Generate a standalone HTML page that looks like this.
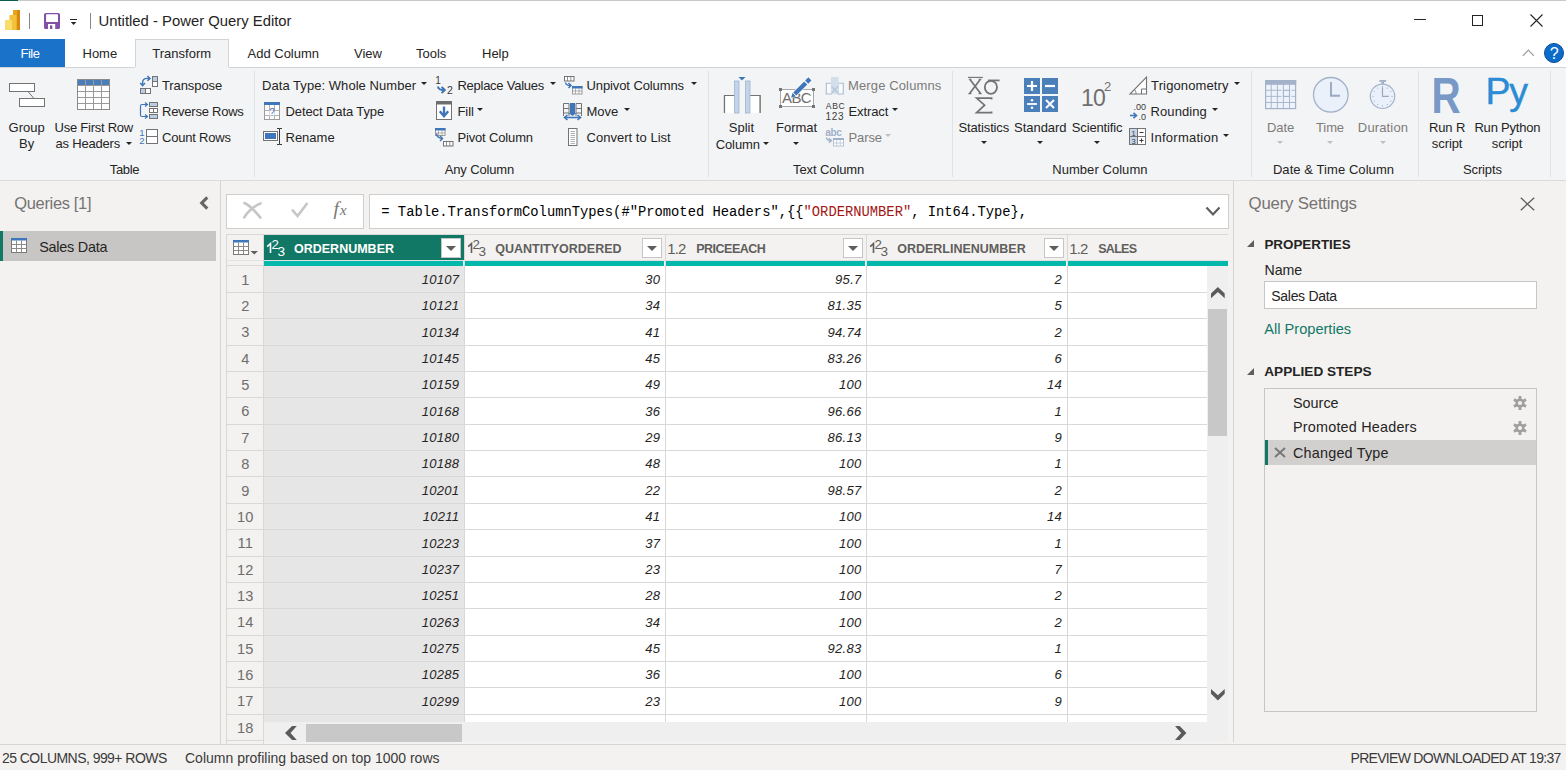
<!DOCTYPE html>
<html><head><meta charset="utf-8"><style>
html,body{margin:0;padding:0;width:1566px;height:770px;overflow:hidden;background:#fff;}
.t{position:absolute;white-space:pre;font-family:'Liberation Sans', sans-serif;}
.r{position:absolute;}
svg.r{overflow:visible;}
</style></head><body>
<div class="r" style="left:0px;top:0px;width:1566px;height:39px;background:#ffffff;"></div><div class="r" style="left:0px;top:0px;width:1566px;height:1px;background:#c9c9c9;"></div><div class="r" style="left:0px;top:0px;width:18px;height:1px;background:#0e5c4b;"></div><svg class="r" style="left:5px;top:10px;" width="16" height="20" viewBox="0 0 16 20">
<rect x="8" y="0" width="7" height="20" fill="#e8a317"/>
<rect x="12" y="0" width="3" height="20" fill="#d48a0c"/>
<rect x="4.5" y="5" width="7" height="15" fill="#f2c23a"/>
<rect x="0" y="10" width="7" height="10" fill="#f9dc6c"/>
</svg><div class="r" style="left:29px;top:13px;width:1px;height:16px;background:#8a8886;"></div><svg class="r" style="left:44px;top:13px;" width="16" height="16" viewBox="0 0 16 16">
<rect x="0" y="0" width="16" height="16" rx="1.6" fill="#8350a8"/>
<rect x="2.1" y="1.3" width="11.9" height="7.8" rx="0.6" fill="#ffffff"/>
<rect x="4" y="11" width="7.2" height="5" fill="#ffffff"/>
<rect x="6" y="12.4" width="2.3" height="3.6" fill="#8350a8"/>
</svg><svg class="r" style="left:70px;top:19px;" width="8" height="7" viewBox="0 0 8 7"><rect x="0" y="0" width="7" height="1" fill="#252423"/><path d="M0.8 3H6.4L3.6 6Z" fill="#252423"/></svg><div class="r" style="left:90px;top:13px;width:1px;height:16px;background:#8a8886;"></div><div class="t" style="left:98.5px;top:14.13px;font-size:14.85px;line-height:14.85px;color:#252423;font-weight:400;font-style:normal;letter-spacing:0px;font-family:'Liberation Sans', sans-serif;">Untitled - Power Query Editor</div><div class="r" style="left:1414px;top:19px;width:12px;height:1px;background:#252423;"></div><div class="r" style="left:1472px;top:14.5px;width:11px;height:11px;background:none;border:1px solid #252423;box-sizing:border-box;"></div><svg class="r" style="left:1530px;top:14px;" width="13" height="13" viewBox="0 0 13 13"><path d="M0.5 0.5L12.5 12.5M12.5 0.5L0.5 12.5" stroke="#252423" stroke-width="1.1"/></svg><div class="r" style="left:0px;top:39px;width:1566px;height:28px;background:#ffffff;"></div><div class="r" style="left:0px;top:39px;width:65px;height:28px;background:#1a73c8;"></div><div class="t" style="left:20.5px;top:47.00px;font-size:13px;line-height:13px;color:#ffffff;font-weight:400;font-style:normal;letter-spacing:-0.5px;font-family:'Liberation Sans', sans-serif;">File</div><div class="t" style="left:82.5px;top:47.00px;font-size:13px;line-height:13px;color:#252423;font-weight:400;font-style:normal;letter-spacing:0px;font-family:'Liberation Sans', sans-serif;">Home</div><div class="r" style="left:135px;top:39px;width:94px;height:29px;background:#f3f4f6;border:1px solid #d2d3d5;border-bottom:none;box-sizing:border-box;"></div><div class="t" style="left:152.3px;top:47.00px;font-size:13px;line-height:13px;color:#252423;font-weight:400;font-style:normal;letter-spacing:0px;font-family:'Liberation Sans', sans-serif;">Transform</div><div class="t" style="left:247.5px;top:47.00px;font-size:13px;line-height:13px;color:#252423;font-weight:400;font-style:normal;letter-spacing:0px;font-family:'Liberation Sans', sans-serif;">Add Column</div><div class="t" style="left:354px;top:47.00px;font-size:13px;line-height:13px;color:#252423;font-weight:400;font-style:normal;letter-spacing:0px;font-family:'Liberation Sans', sans-serif;">View</div><div class="t" style="left:416px;top:47.00px;font-size:13px;line-height:13px;color:#252423;font-weight:400;font-style:normal;letter-spacing:0px;font-family:'Liberation Sans', sans-serif;">Tools</div><div class="t" style="left:482px;top:47.00px;font-size:13px;line-height:13px;color:#252423;font-weight:400;font-style:normal;letter-spacing:0px;font-family:'Liberation Sans', sans-serif;">Help</div><svg class="r" style="left:1521.5px;top:49px;" width="13" height="8" viewBox="0 0 13 8"><path d="M0.8 6.8L6.3 1.2L11.8 6.8" stroke="#9a9a9a" stroke-width="1.2" fill="none"/></svg><svg class="r" style="left:1543.5px;top:43px;" width="20" height="20" viewBox="0 0 20 20"><circle cx="10" cy="10" r="9.5" fill="#0c6cc9" stroke="#0a4c98" stroke-width="1"/><text x="10.2" y="15.9" text-anchor="middle" font-family="Liberation Sans" font-size="16" fill="#fff">?</text></svg><div class="r" style="left:0px;top:67px;width:1566px;height:114px;background:#f3f4f6;"></div><div class="r" style="left:0px;top:67px;width:135px;height:1px;background:#d2d3d5;"></div><div class="r" style="left:229px;top:67px;width:1337px;height:1px;background:#d2d3d5;"></div><div class="r" style="left:0px;top:180px;width:1566px;height:1px;background:#dadbdd;"></div><div class="r" style="left:254px;top:71px;width:1px;height:106px;background:#e1e2e4;"></div><div class="r" style="left:708px;top:71px;width:1px;height:106px;background:#e1e2e4;"></div><div class="r" style="left:952px;top:71px;width:1px;height:106px;background:#e1e2e4;"></div><div class="r" style="left:1251px;top:71px;width:1px;height:106px;background:#e1e2e4;"></div><div class="r" style="left:1418px;top:71px;width:1px;height:106px;background:#e1e2e4;"></div><div class="r" style="left:1550px;top:71px;width:1px;height:106px;background:#e1e2e4;"></div><svg class="r" style="left:0px;top:70px;" width="60" height="50" viewBox="0 0 60 50">
<rect x="9.5" y="13.5" width="25" height="8" fill="#fff" stroke="#737373"/>
<rect x="19.5" y="28.5" width="25" height="8" fill="#fff" stroke="#737373"/>
<path d="M28 21.5L34 28.5" stroke="#737373" stroke-width="1"/>
</svg><div class="t" style="left:26.6px;transform:translateX(-50%);top:120.80px;font-size:13px;line-height:13px;color:#252423;font-weight:400;font-style:normal;letter-spacing:0px;font-family:'Liberation Sans', sans-serif;">Group</div><div class="t" style="left:26.6px;transform:translateX(-50%);top:137.10px;font-size:13px;line-height:13px;color:#252423;font-weight:400;font-style:normal;letter-spacing:0px;font-family:'Liberation Sans', sans-serif;">By</div><svg class="r" style="left:77px;top:79px;" width="33" height="31" viewBox="0 0 33 31">
<rect x="0.5" y="0.5" width="32" height="30" fill="#fff" stroke="#8a8a8a"/>
<rect x="0.5" y="0.5" width="32" height="6" fill="#4a7ebb" stroke="#4a7ebb"/>
<path d="M0 6.5H33" stroke="#9a9a9a"/><path d="M0 12.5H33" stroke="#9a9a9a"/><path d="M0 18.5H33" stroke="#9a9a9a"/><path d="M0 24.5H33" stroke="#9a9a9a"/><path d="M8.5 0V31" stroke="#9a9a9a"/><path d="M16.5 0V31" stroke="#9a9a9a"/><path d="M24.5 0V31" stroke="#9a9a9a"/>
<rect x="0.5" y="0.5" width="32" height="30" fill="none" stroke="#8a8a8a"/>
</svg><div class="t" style="left:93.8px;transform:translateX(-50%);top:120.80px;font-size:13px;line-height:13px;color:#252423;font-weight:400;font-style:normal;letter-spacing:-0.25px;font-family:'Liberation Sans', sans-serif;">Use First Row</div><div class="t" style="left:55.5px;top:137.10px;font-size:13px;line-height:13px;color:#252423;font-weight:400;font-style:normal;letter-spacing:-0.2px;font-family:'Liberation Sans', sans-serif;">as Headers</div><svg class="r" style="left:125.5px;top:141.5px;" width="6" height="3" viewBox="0 0 6 3"><path d="M0 0H6L3.0 3Z" fill="#252423"/></svg><svg class="r" style="left:139px;top:75px;" width="20" height="20" viewBox="0 0 20 20">
<rect x="13.5" y="1.5" width="5" height="10" fill="#fff" stroke="#737373"/>
<rect x="14" y="2" width="4" height="4.5" fill="#b9cde5"/>
<path d="M13.5 6.5H18.5" stroke="#737373"/>
<rect x="1.5" y="13.5" width="10" height="5" fill="#fff" stroke="#737373"/>
<rect x="2" y="14" width="4.5" height="4" fill="#b9cde5"/>
<path d="M6.5 13.5V18.5" stroke="#737373"/>
<path d="M3.6 9.6V7.6Q3.6 3.4 8 3.4H10" stroke="#3f76b9" stroke-width="1.4" fill="none"/>
<path d="M8.4 1L11 3.4L8.4 5.8" stroke="#3f76b9" stroke-width="1.5" fill="none"/>
<path d="M1.2 8L3.6 10.6L6 8" stroke="#3f76b9" stroke-width="1.5" fill="none"/>
</svg><div class="t" style="left:162px;top:78.80px;font-size:13px;line-height:13px;color:#252423;font-weight:400;font-style:normal;letter-spacing:-0.1px;font-family:'Liberation Sans', sans-serif;">Transpose</div><svg class="r" style="left:139px;top:101px;" width="20" height="19" viewBox="0 0 20 19">
<rect x="10.5" y="1.5" width="8" height="4" fill="#b9cde5" stroke="#737373"/>
<rect x="10.5" y="7.5" width="8" height="4" fill="#fff" stroke="#737373"/>
<path d="M14.5 7.5V11.5" stroke="#737373"/>
<rect x="10.5" y="13.5" width="8" height="4" fill="#b9cde5" stroke="#737373"/>
<path d="M8 3.5H3Q1.5 3.5 1.5 5V14Q1.5 15.5 3 15.5H8" stroke="#3f76b9" stroke-width="1.2" fill="none"/>
<path d="M6 1.5L8.5 3.5L6 5.5M6 13.5L8.5 15.5L6 17.5" stroke="#3f76b9" stroke-width="1.2" fill="none"/>
</svg><div class="t" style="left:162px;top:104.70px;font-size:13px;line-height:13px;color:#252423;font-weight:400;font-style:normal;letter-spacing:-0.25px;font-family:'Liberation Sans', sans-serif;">Reverse Rows</div><svg class="r" style="left:139px;top:128px;" width="20" height="17" viewBox="0 0 20 17">
<text x="3" y="8" font-family="Liberation Sans" font-size="9.5" fill="#3f76b9" text-anchor="middle">1</text>
<text x="3" y="15.8" font-family="Liberation Sans" font-size="9.5" fill="#3f76b9" text-anchor="middle">2</text>
<rect x="7.5" y="1.5" width="11" height="14" fill="#fff" stroke="#737373"/>
<path d="M7.5 8.5H18.5" stroke="#737373"/>
</svg><div class="t" style="left:162px;top:130.70px;font-size:13px;line-height:13px;color:#252423;font-weight:400;font-style:normal;letter-spacing:-0.2px;font-family:'Liberation Sans', sans-serif;">Count Rows</div><div class="t" style="left:124.5px;transform:translateX(-50%);top:163.00px;font-size:13px;line-height:13px;color:#252423;font-weight:400;font-style:normal;letter-spacing:-0.35px;font-family:'Liberation Sans', sans-serif;">Table</div><div class="t" style="left:262px;top:78.80px;font-size:13px;line-height:13px;color:#252423;font-weight:400;font-style:normal;letter-spacing:0.05px;font-family:'Liberation Sans', sans-serif;">Data Type: Whole Number</div><svg class="r" style="left:421.0px;top:82.3px;" width="6" height="3" viewBox="0 0 6 3"><path d="M0 0H6L3.0 3Z" fill="#252423"/></svg><svg class="r" style="left:263px;top:101px;" width="18" height="20" viewBox="0 0 18 20">
<rect x="1.5" y="1.5" width="15" height="17" fill="#fff" stroke="#9a9a9a"/>
<rect x="1" y="1" width="16" height="3" fill="#3f76b9"/>
<path d="M1.5 9.5H16.5M1.5 14.5H16.5M6.5 4V18.5M11.5 4V18.5" stroke="#b0b0b0"/>
<rect x="6.5" y="9.5" width="5" height="5" fill="#fff"/><text x="9" y="15" font-family="Liberation Sans" font-size="10" fill="#3f76b9" text-anchor="middle">?</text>
</svg><div class="t" style="left:285.5px;top:104.70px;font-size:13px;line-height:13px;color:#252423;font-weight:400;font-style:normal;letter-spacing:-0.1px;font-family:'Liberation Sans', sans-serif;">Detect Data Type</div><svg class="r" style="left:262px;top:128px;" width="21" height="17" viewBox="0 0 21 17">
<rect x="1.5" y="3.5" width="14" height="9" fill="#fff" stroke="#737373"/>
<rect x="3" y="5" width="11" height="6" fill="#3f76b9"/>
<path d="M15 0.5H17.5M20 0.5H17.5V16.5H15M20 16.5H17.5" stroke="#3b3a39" fill="none"/>
</svg><div class="t" style="left:285.5px;top:130.80px;font-size:13px;line-height:13px;color:#252423;font-weight:400;font-style:normal;letter-spacing:0px;font-family:'Liberation Sans', sans-serif;">Rename</div><svg class="r" style="left:434px;top:76px;" width="20" height="19" viewBox="0 0 20 19">
<text x="4" y="8" font-family="Liberation Sans" font-size="10" fill="#3b3a39" text-anchor="middle">1</text>
<text x="15.8" y="17.8" font-family="Liberation Sans" font-size="10.5" fill="#3b3a39" text-anchor="middle">2</text>
<path d="M4 10.5Q4.2 14 10 14" stroke="#3f76b9" stroke-width="2" fill="none"/>
<path d="M7.6 11L10.8 14L7.6 17" stroke="#3f76b9" stroke-width="2" fill="none"/>
</svg><div class="t" style="left:457.4px;top:78.80px;font-size:13px;line-height:13px;color:#252423;font-weight:400;font-style:normal;letter-spacing:-0.25px;font-family:'Liberation Sans', sans-serif;">Replace Values</div><svg class="r" style="left:550.0px;top:82.3px;" width="6" height="3" viewBox="0 0 6 3"><path d="M0 0H6L3.0 3Z" fill="#252423"/></svg><svg class="r" style="left:435px;top:100px;" width="18" height="21" viewBox="0 0 18 21">
<rect x="1.5" y="1.5" width="15" height="18" fill="#fff" stroke="#737373"/>
<rect x="1" y="1" width="16" height="3.5" fill="#6e6e6e"/>
<path d="M9 6.5V15" stroke="#3f76b9" stroke-width="2.4"/>
<path d="M4.8 11.2L9 16.2L13.2 11.2" stroke="#3f76b9" stroke-width="2.4" fill="none"/>
</svg><div class="t" style="left:457.4px;top:104.70px;font-size:13px;line-height:13px;color:#252423;font-weight:400;font-style:normal;letter-spacing:0px;font-family:'Liberation Sans', sans-serif;">Fill</div><svg class="r" style="left:477.0px;top:108.3px;" width="6" height="3" viewBox="0 0 6 3"><path d="M0 0H6L3.0 3Z" fill="#252423"/></svg><svg class="r" style="left:434px;top:127px;" width="20" height="20" viewBox="0 0 20 20">
<rect x="1.5" y="1.5" width="9.5" height="7" fill="#fff" stroke="#9a9a9a"/>
<rect x="1" y="1" width="10.5" height="2.5" fill="#3f76b9"/>
<path d="M1.5 6H11M4.5 3.5V8.5M8 3.5V8.5" stroke="#9a9a9a" stroke-width="0.8"/>
<path d="M2.5 6.5Q3 11 8 11.5" stroke="#3f76b9" stroke-width="1.5" fill="none"/>
<path d="M6 9L8.5 11.5L6 14" stroke="#3f76b9" stroke-width="1.5" fill="none"/>
<rect x="9.5" y="14.5" width="9.5" height="4.5" fill="#fff" stroke="#737373"/>
<path d="M12.5 15V19M15.8 15V19" stroke="#737373" stroke-width="0.8"/>
</svg><div class="t" style="left:457.4px;top:130.70px;font-size:13px;line-height:13px;color:#252423;font-weight:400;font-style:normal;letter-spacing:-0.15px;font-family:'Liberation Sans', sans-serif;">Pivot Column</div><svg class="r" style="left:563px;top:75px;" width="20" height="20" viewBox="0 0 20 20">
<rect x="1.5" y="1.5" width="9.5" height="4.5" fill="#fff" stroke="#737373"/>
<path d="M4.5 2V6M7.8 2V6" stroke="#737373" stroke-width="0.8"/>
<path d="M2.5 7.5Q3 10.5 7.5 10.5" stroke="#3f76b9" stroke-width="1.5" fill="none"/>
<path d="M5.5 8L8 10.5L5.5 13" stroke="#3f76b9" stroke-width="1.5" fill="none"/>
<rect x="9.5" y="11.5" width="9.5" height="7.5" fill="#fff" stroke="#9a9a9a"/>
<rect x="9" y="11" width="10.5" height="2.5" fill="#3f76b9"/>
<path d="M9.5 16H19M12.5 13.5V19M16 13.5V19" stroke="#9a9a9a" stroke-width="0.8"/>
</svg><div class="t" style="left:586.5px;top:78.80px;font-size:13px;line-height:13px;color:#252423;font-weight:400;font-style:normal;letter-spacing:-0.1px;font-family:'Liberation Sans', sans-serif;">Unpivot Columns</div><svg class="r" style="left:691.0px;top:82.3px;" width="6" height="3" viewBox="0 0 6 3"><path d="M0 0H6L3.0 3Z" fill="#252423"/></svg><svg class="r" style="left:562px;top:102px;" width="21" height="19" viewBox="0 0 21 19">
<path d="M1.5 14V1.5H7V14M1.5 6.5H7M1.5 11H7" stroke="#737373" fill="none"/>
<path d="M14 14V1.5H19.5V14M14 6.5H19.5M14 11H19.5" stroke="#737373" fill="none"/>
<rect x="8" y="1" width="5" height="11" fill="#3f76b9"/>
<path d="M6.5 11L10.5 14L14.5 11Z" fill="#3f76b9"/>
<path d="M3 15.5H18" stroke="#3f76b9" stroke-width="1.6"/>
<path d="M5.5 13L2.5 15.5L5.5 18M15.5 13L18.5 15.5L15.5 18" stroke="#3f76b9" stroke-width="1.6" fill="none"/>
</svg><div class="t" style="left:586.5px;top:104.70px;font-size:13px;line-height:13px;color:#252423;font-weight:400;font-style:normal;letter-spacing:0px;font-family:'Liberation Sans', sans-serif;">Move</div><svg class="r" style="left:624.0px;top:108.3px;" width="6" height="3" viewBox="0 0 6 3"><path d="M0 0H6L3.0 3Z" fill="#252423"/></svg><svg class="r" style="left:567px;top:127px;" width="11" height="19" viewBox="0 0 11 19">
<rect x="1.5" y="1.5" width="8.5" height="17" fill="#fff" stroke="#737373"/>
<path d="M3.5 4.5H8M3.5 6.5H8M3.5 8.5H8M3.5 10.5H8M3.5 12.5H8M3.5 14.5H8M3.5 16.5H8" stroke="#a0a0a0" stroke-width="0.8"/>
</svg><div class="t" style="left:586.5px;top:130.70px;font-size:13px;line-height:13px;color:#252423;font-weight:400;font-style:normal;letter-spacing:0.03px;font-family:'Liberation Sans', sans-serif;">Convert to List</div><div class="t" style="left:479.4px;transform:translateX(-50%);top:163.00px;font-size:13px;line-height:13px;color:#252423;font-weight:400;font-style:normal;letter-spacing:-0.15px;font-family:'Liberation Sans', sans-serif;">Any Column</div><svg class="r" style="left:723px;top:76px;" width="38" height="38" viewBox="0 0 38 38">
<path d="M1.5 37V19.5H11.5M27 19.5H37V37" stroke="#737373" stroke-width="1.2" fill="#fff"/>
<rect x="1.5" y="19.5" width="10" height="17.5" fill="#fff"/>
<rect x="27" y="19.5" width="10" height="17.5" fill="#fff"/>
<path d="M1.5 37V19.5H11.5M27 19.5H37V37" stroke="#737373" stroke-width="1.2" fill="none"/>
<rect x="11.5" y="5" width="4.5" height="32" fill="#c3d4e8" stroke="#9db3cf" stroke-width="0.8"/>
<rect x="22.5" y="5" width="4.5" height="32" fill="#c3d4e8" stroke="#9db3cf" stroke-width="0.8"/>
<path d="M15.5 1H22.5L19 4.5Z" fill="#3f76b9"/>
</svg><div class="t" style="left:741.4px;transform:translateX(-50%);top:121.20px;font-size:13px;line-height:13px;color:#252423;font-weight:400;font-style:normal;letter-spacing:0px;font-family:'Liberation Sans', sans-serif;">Split</div><div class="t" style="left:715.7px;top:137.50px;font-size:13px;line-height:13px;color:#252423;font-weight:400;font-style:normal;letter-spacing:-0.1px;font-family:'Liberation Sans', sans-serif;">Column</div><svg class="r" style="left:763.0px;top:142px;" width="6" height="3" viewBox="0 0 6 3"><path d="M0 0H6L3.0 3Z" fill="#252423"/></svg><svg class="r" style="left:778px;top:76px;" width="40" height="33" viewBox="0 0 40 33">
<rect x="2.5" y="13.5" width="33" height="17" fill="#fff" stroke="#a8a8a8"/>
<rect x="1" y="12" width="3" height="3" fill="#737373"/>
<rect x="34" y="12" width="3" height="3" fill="#737373"/>
<rect x="1" y="29" width="3" height="3" fill="#737373"/>
<rect x="34" y="29" width="3" height="3" fill="#737373"/>
<text x="4" y="26.7" font-family="Liberation Sans" font-size="15" fill="#6e6e6e" letter-spacing="-0.6">ABC</text>
<g transform="translate(13.1 21.7) rotate(-45)">
<path d="M0 0L4.5 -2.4V2.4Z" fill="#3f76b9" stroke="#fff" stroke-width="1.2" paint-order="stroke"/>
<rect x="5.2" y="-2.2" width="15.5" height="4.4" fill="#3f76b9" stroke="#fff" stroke-width="1.2" paint-order="stroke"/>
<rect x="22" y="-2.2" width="4.6" height="4.4" fill="#3f76b9" stroke="#fff" stroke-width="1.2" paint-order="stroke"/>
</g>
</svg><div class="t" style="left:796.6px;transform:translateX(-50%);top:121.20px;font-size:13px;line-height:13px;color:#252423;font-weight:400;font-style:normal;letter-spacing:0px;font-family:'Liberation Sans', sans-serif;">Format</div><svg class="r" style="left:793.0px;top:142px;" width="6" height="3" viewBox="0 0 6 3"><path d="M0 0H6L3.0 3Z" fill="#252423"/></svg><svg class="r" style="left:825px;top:76px;" width="20" height="19" viewBox="0 0 20 19">
<path d="M1.3 18V7.3H6.5V18Z" fill="#f8fafd" stroke="#aabbd4" stroke-width="1.1"/>
<path d="M18.3 18V7.3H13V18Z" fill="#f8fafd" stroke="#aabbd4" stroke-width="1.1"/>
<rect x="6" y="1" width="7.6" height="17" fill="#d3deeb"/>
<path d="M6.5 10.5L13 17M13 10.5L6.5 17" stroke="#b3c3d8" stroke-width="1.1"/>
</svg><div class="t" style="left:848px;top:78.80px;font-size:13px;line-height:13px;color:#7d7b79;font-weight:400;font-style:normal;letter-spacing:0.13px;font-family:'Liberation Sans', sans-serif;">Merge Columns</div><svg class="r" style="left:825px;top:101px;" width="20" height="20" viewBox="0 0 20 20">
<text x="0.8" y="8" font-family="Liberation Sans" font-size="8.6" fill="#3b3a39" letter-spacing="0.6">ABC</text>
<text x="0.5" y="18.5" font-family="Liberation Sans" font-size="10" fill="#3b3a39" letter-spacing="0.7">123</text>
</svg><div class="t" style="left:848.5px;top:104.70px;font-size:13px;line-height:13px;color:#252423;font-weight:400;font-style:normal;letter-spacing:-0.1px;font-family:'Liberation Sans', sans-serif;">Extract</div><svg class="r" style="left:891.5px;top:108.3px;" width="6" height="3" viewBox="0 0 6 3"><path d="M0 0H6L3.0 3Z" fill="#252423"/></svg><svg class="r" style="left:825px;top:128px;" width="20" height="19" viewBox="0 0 20 19">
<text x="0.3" y="8" font-family="Liberation Sans" font-weight="700" font-size="10" fill="#9fb0ca" letter-spacing="-0.4">abc</text>
<path d="M1.5 9.5Q1.5 12.5 6 12.5" stroke="#9fb0ca" stroke-width="1.4" fill="none"/>
<path d="M4 10.2L6.5 12.5L4 14.8" stroke="#9fb0ca" stroke-width="1.4" fill="none"/>
<rect x="8.5" y="10.5" width="10" height="7.5" fill="#fff" stroke="#b6c3d6"/>
<rect x="8" y="10" width="11" height="2" fill="#9fb0ca"/>
<path d="M8.5 15H18.5M11.8 12V18M15.2 12V18" stroke="#b6c3d6" stroke-width="0.8"/>
</svg><div class="t" style="left:848.5px;top:130.70px;font-size:13px;line-height:13px;color:#7d7b79;font-weight:400;font-style:normal;letter-spacing:-0.1px;font-family:'Liberation Sans', sans-serif;">Parse</div><svg class="r" style="left:885.0px;top:134.3px;" width="6" height="3" viewBox="0 0 6 3"><path d="M0 0H6L3.0 3Z" fill="#c0bfbe"/></svg><div class="t" style="left:828.6px;transform:translateX(-50%);top:163.00px;font-size:13px;line-height:13px;color:#252423;font-weight:400;font-style:normal;letter-spacing:-0.1px;font-family:'Liberation Sans', sans-serif;">Text Column</div><svg class="r" style="left:966px;top:76px;" width="36" height="38" viewBox="0 0 36 38">
<path d="M2 1.4H17" stroke="#737373" stroke-width="1.1"/>
<path d="M3.8 3.2L14.6 17.6M14.4 3.2L3.6 17.6" stroke="#737373" stroke-width="1.7"/>
<path d="M2.8 3.2H5.4M12.6 3.2H15.4M2.4 17.6H5.4M12.6 17.6H15.6" stroke="#737373" stroke-width="1.1"/>
<ellipse cx="24.9" cy="11.3" rx="6.1" ry="6.5" stroke="#737373" stroke-width="1.8" fill="none"/>
<path d="M22 4.4H33.6" stroke="#737373" stroke-width="1.7"/>
<path d="M25.6 23.4V22.2H10.6L18.6 29.2L10.6 36.6H25.6V35.4" stroke="#737373" stroke-width="1.7" fill="none" stroke-linejoin="miter"/>
</svg><div class="t" style="left:983.8px;transform:translateX(-50%);top:120.80px;font-size:13px;line-height:13px;color:#252423;font-weight:400;font-style:normal;letter-spacing:-0.15px;font-family:'Liberation Sans', sans-serif;">Statistics</div><svg class="r" style="left:980.7px;top:141.3px;" width="6" height="3" viewBox="0 0 6 3"><path d="M0 0H6L3.0 3Z" fill="#252423"/></svg><svg class="r" style="left:1023px;top:77px;" width="36" height="36" viewBox="0 0 36 36">
<rect x="1" y="1" width="16" height="16" fill="#4a7fba"/>
<rect x="19" y="1" width="16" height="16" fill="#4a7fba"/>
<rect x="1" y="19" width="16" height="16" fill="#4a7fba"/>
<rect x="19" y="19" width="16" height="16" fill="#4a7fba"/>
<path d="M9 4V14M4 9H14" stroke="#fff" stroke-width="2.2"/>
<path d="M22 9H32" stroke="#fff" stroke-width="2.2"/>
<path d="M4 27H14" stroke="#fff" stroke-width="1.8"/>
<circle cx="9" cy="23.3" r="1.3" fill="#fff"/><circle cx="9" cy="30.7" r="1.3" fill="#fff"/>
<path d="M23 23L31 31M31 23L23 31" stroke="#fff" stroke-width="2"/>
</svg><div class="t" style="left:1040.3px;transform:translateX(-50%);top:120.80px;font-size:13px;line-height:13px;color:#252423;font-weight:400;font-style:normal;letter-spacing:-0.05px;font-family:'Liberation Sans', sans-serif;">Standard</div><svg class="r" style="left:1036.8px;top:141.3px;" width="6" height="3" viewBox="0 0 6 3"><path d="M0 0H6L3.0 3Z" fill="#252423"/></svg><svg class="r" style="left:1080px;top:76px;" width="36" height="32" viewBox="0 0 36 32">
<text x="1" y="29.5" font-family="Liberation Sans" font-size="23" fill="#6f6f6f" letter-spacing="-0.8">10</text>
<text x="24" y="14.5" font-family="Liberation Sans" font-size="13" fill="#6f6f6f">2</text>
</svg><div class="t" style="left:1097.1px;transform:translateX(-50%);top:120.80px;font-size:13px;line-height:13px;color:#252423;font-weight:400;font-style:normal;letter-spacing:-0.15px;font-family:'Liberation Sans', sans-serif;">Scientific</div><svg class="r" style="left:1094.2px;top:141.3px;" width="6" height="3" viewBox="0 0 6 3"><path d="M0 0H6L3.0 3Z" fill="#252423"/></svg><svg class="r" style="left:1129px;top:76px;" width="19" height="19" viewBox="0 0 19 19">
<path d="M1 18H17.5V1Z" stroke="#737373" stroke-width="1.1" fill="#fff" stroke-linejoin="miter"/>
<path d="M12.5 18V13H17.5" stroke="#737373" stroke-width="1" fill="none"/>
<path d="M5.5 13.5Q7 15 7.2 18" stroke="#737373" stroke-width="0.9" fill="none"/>
</svg><div class="t" style="left:1151.1px;top:78.80px;font-size:13px;line-height:13px;color:#252423;font-weight:400;font-style:normal;letter-spacing:0.12px;font-family:'Liberation Sans', sans-serif;">Trigonometry</div><svg class="r" style="left:1234.1px;top:82.3px;" width="6" height="3" viewBox="0 0 6 3"><path d="M0 0H6L3.0 3Z" fill="#252423"/></svg><svg class="r" style="left:1129px;top:102px;" width="18" height="19" viewBox="0 0 18 19">
<text x="17" y="8" font-family="Liberation Sans" font-size="9" fill="#3b3a39" text-anchor="end">.00</text>
<text x="17" y="17.5" font-family="Liberation Sans" font-size="9" fill="#3b3a39" text-anchor="end">.0</text>
<path d="M1 13.5H7" stroke="#3f76b9" stroke-width="1.6"/>
<path d="M4.5 10.8L7.5 13.5L4.5 16.2" stroke="#3f76b9" stroke-width="1.6" fill="none"/>
</svg><div class="t" style="left:1150.6px;top:104.70px;font-size:13px;line-height:13px;color:#252423;font-weight:400;font-style:normal;letter-spacing:0.08px;font-family:'Liberation Sans', sans-serif;">Rounding</div><svg class="r" style="left:1212.1px;top:108.3px;" width="6" height="3" viewBox="0 0 6 3"><path d="M0 0H6L3.0 3Z" fill="#252423"/></svg><svg class="r" style="left:1128px;top:127px;" width="19" height="19" viewBox="0 0 19 19">
<rect x="1.5" y="1.5" width="16" height="16" fill="#fff" stroke="#737373"/>
<rect x="2" y="2" width="7.5" height="15" fill="#c6d6ea"/>
<path d="M9.5 1.5V17.5M1.5 9.5H17.5" stroke="#737373"/>
<text x="5.6" y="8.6" font-family="Liberation Sans" font-size="7.5" fill="#3b3a39" text-anchor="middle">1</text>
<text x="5.6" y="16.6" font-family="Liberation Sans" font-size="7.5" fill="#3b3a39" text-anchor="middle">3</text>
<path d="M11.5 5.5H15.5M11.5 13.5H15.5M13.5 11.5V15.5" stroke="#3b3a39" stroke-width="1"/>
</svg><div class="t" style="left:1150.6px;top:130.70px;font-size:13px;line-height:13px;color:#252423;font-weight:400;font-style:normal;letter-spacing:0.26px;font-family:'Liberation Sans', sans-serif;">Information</div><svg class="r" style="left:1223.1px;top:134.3px;" width="6" height="3" viewBox="0 0 6 3"><path d="M0 0H6L3.0 3Z" fill="#252423"/></svg><div class="t" style="left:1099.9px;transform:translateX(-50%);top:163.00px;font-size:13px;line-height:13px;color:#252423;font-weight:400;font-style:normal;letter-spacing:0.05px;font-family:'Liberation Sans', sans-serif;">Number Column</div><svg class="r" style="left:1264px;top:79px;" width="33" height="31" viewBox="0 0 33 31">
<rect x="1.6" y="1.6" width="30" height="28" fill="#eef3fb" stroke="#a3b2c8" stroke-width="1.2"/>
<rect x="1" y="1" width="31.2" height="4.8" fill="#a3b2c8"/>
<path d="M7.2 5V30M13.4 5V30M19.4 5V11M19.4 17.4V30M25.5 5V11M25.5 17.4V30" stroke="#a3b2c8" stroke-width="0.9"/>
<path d="M1 11.3H17.5M27.5 11.3H32M1 17.4H17.5M27.5 17.4H32M1 23.5H32" stroke="#a3b2c8" stroke-width="0.9"/>
<rect x="19.4" y="11.3" width="6.1" height="6.1" fill="none" stroke="#a3b2c8" stroke-width="1.1"/>
</svg><div class="t" style="left:1280.5px;transform:translateX(-50%);top:121.00px;font-size:13px;line-height:13px;color:#7d7b79;font-weight:400;font-style:normal;letter-spacing:-0.1px;font-family:'Liberation Sans', sans-serif;">Date</div><svg class="r" style="left:1277.1px;top:141px;" width="6" height="3" viewBox="0 0 6 3"><path d="M0 0H6L3.0 3Z" fill="#c0bfbe"/></svg><svg class="r" style="left:1312px;top:76px;" width="38" height="38" viewBox="0 0 38 38">
<circle cx="18.8" cy="18.8" r="17.3" fill="#eaf1fb" stroke="#a3b2c8" stroke-width="1.3"/>
<path d="M19 6V19.7H28" stroke="#9aa9c0" stroke-width="1.9" fill="none"/>
</svg><div class="t" style="left:1330px;transform:translateX(-50%);top:121.00px;font-size:13px;line-height:13px;color:#7d7b79;font-weight:400;font-style:normal;letter-spacing:-0.1px;font-family:'Liberation Sans', sans-serif;">Time</div><svg class="r" style="left:1327.0px;top:141px;" width="6" height="3" viewBox="0 0 6 3"><path d="M0 0H6L3.0 3Z" fill="#c0bfbe"/></svg><svg class="r" style="left:1369px;top:79px;" width="27" height="31" viewBox="0 0 27 31">
<circle cx="13.5" cy="17.3" r="12.2" fill="#eaf1fb" stroke="#a3b2c8" stroke-width="1.2"/>
<rect x="10.4" y="1" width="6.7" height="1.9" fill="#a3b2c8"/>
<rect x="12.5" y="2.5" width="2.5" height="2.8" fill="#a3b2c8"/>
<path d="M13.5 8.2V17.4H19.8" stroke="#9aa9c0" stroke-width="1.2" fill="none"/>
<circle cx="23.10" cy="17.30" r="0.6" fill="#9aa9c0"/><circle cx="21.81" cy="22.10" r="0.6" fill="#9aa9c0"/><circle cx="18.30" cy="25.61" r="0.6" fill="#9aa9c0"/><circle cx="13.50" cy="26.90" r="0.6" fill="#9aa9c0"/><circle cx="8.70" cy="25.61" r="0.6" fill="#9aa9c0"/><circle cx="5.19" cy="22.10" r="0.6" fill="#9aa9c0"/><circle cx="3.90" cy="17.30" r="0.6" fill="#9aa9c0"/><circle cx="5.19" cy="12.50" r="0.6" fill="#9aa9c0"/><circle cx="8.70" cy="8.99" r="0.6" fill="#9aa9c0"/><circle cx="13.50" cy="7.70" r="0.6" fill="#9aa9c0"/><circle cx="18.30" cy="8.99" r="0.6" fill="#9aa9c0"/><circle cx="21.81" cy="12.50" r="0.6" fill="#9aa9c0"/>
</svg><div class="t" style="left:1383px;transform:translateX(-50%);top:121.00px;font-size:13px;line-height:13px;color:#7d7b79;font-weight:400;font-style:normal;letter-spacing:0.14px;font-family:'Liberation Sans', sans-serif;">Duration</div><svg class="r" style="left:1379.9px;top:141px;" width="6" height="3" viewBox="0 0 6 3"><path d="M0 0H6L3.0 3Z" fill="#c0bfbe"/></svg><div class="t" style="left:1333.5px;transform:translateX(-50%);top:163.00px;font-size:13px;line-height:13px;color:#252423;font-weight:400;font-style:normal;letter-spacing:0.07px;font-family:'Liberation Sans', sans-serif;">Date &amp; Time Column</div><svg class="r" style="left:1432px;top:76px;" width="32" height="38" viewBox="0 0 32 38">
<text x="0" y="36.9" font-family="Liberation Sans" font-weight="700" font-size="50.5" fill="#7899c6" transform="translate(-0.6 0) scale(0.8,1)">R</text>
</svg><div class="t" style="left:1447.1px;transform:translateX(-50%);top:121.00px;font-size:13px;line-height:13px;color:#252423;font-weight:400;font-style:normal;letter-spacing:-0.1px;font-family:'Liberation Sans', sans-serif;">Run R</div><div class="t" style="left:1447.1px;transform:translateX(-50%);top:137.40px;font-size:13px;line-height:13px;color:#252423;font-weight:400;font-style:normal;letter-spacing:-0.1px;font-family:'Liberation Sans', sans-serif;">script</div><svg class="r" style="left:1485px;top:76px;" width="44" height="38" viewBox="0 0 44 38">
<text x="0.5" y="28" font-family="Liberation Sans" font-size="37.5" fill="#2b8bd5" letter-spacing="-1.2" stroke="#2b8bd5" stroke-width="0.4">Py</text>
</svg><div class="t" style="left:1507.4px;transform:translateX(-50%);top:121.00px;font-size:13px;line-height:13px;color:#252423;font-weight:400;font-style:normal;letter-spacing:-0.2px;font-family:'Liberation Sans', sans-serif;">Run Python</div><div class="t" style="left:1507px;transform:translateX(-50%);top:137.40px;font-size:13px;line-height:13px;color:#252423;font-weight:400;font-style:normal;letter-spacing:-0.1px;font-family:'Liberation Sans', sans-serif;">script</div><div class="t" style="left:1482.4px;transform:translateX(-50%);top:163.00px;font-size:13px;line-height:13px;color:#252423;font-weight:400;font-style:normal;letter-spacing:-0.15px;font-family:'Liberation Sans', sans-serif;">Scripts</div><div class="r" style="left:0px;top:181px;width:1566px;height:563px;background:#f3f2f1;"></div><div class="r" style="left:220px;top:181px;width:1px;height:563px;background:#d6d5d4;"></div><div class="t" style="left:14.3px;top:195.13px;font-size:16.5px;line-height:16.5px;color:#767472;font-weight:400;font-style:normal;letter-spacing:-0.35px;font-family:'Liberation Sans', sans-serif;">Queries [1]</div><svg class="r" style="left:199px;top:196px;" width="11" height="14" viewBox="0 0 11 14"><path d="M0.5 7L7.2 0.3L9.4 2.5L4.9 7L9.4 11.5L7.2 13.7Z" fill="#666666"/></svg><div class="r" style="left:0px;top:231px;width:216px;height:30px;background:#c8c6c4;"></div><div class="r" style="left:0px;top:231px;width:3px;height:30px;background:#117865;"></div><svg class="r" style="left:11px;top:238px;" width="16" height="15" viewBox="0 0 16 15">
<rect x="0.5" y="0.5" width="15" height="14" fill="#fff" stroke="#7a7a7a"/>
<rect x="0" y="0" width="16" height="2.5" fill="#3f76b9"/>
<path d="M0.5 6.5H15.5M0.5 10.5H15.5M5.5 2.5V14.5M10.5 2.5V14.5" stroke="#8a8a8a"/>
</svg><div class="t" style="left:39.2px;top:240.11px;font-size:14.4px;line-height:14.4px;color:#252423;font-weight:400;font-style:normal;letter-spacing:-0.22px;font-family:'Liberation Sans', sans-serif;">Sales Data</div><div class="r" style="left:226px;top:194px;width:138px;height:35px;background:#fff;border:1px solid #cfcecd;box-sizing:border-box;"></div><svg class="r" style="left:240px;top:200px;" width="25" height="22" viewBox="0 0 25 22"><path d="M4.4 3Q11 6 20.4 17.6" stroke="#c8c6c4" stroke-width="2.6" fill="none" stroke-linecap="round"/><path d="M20.6 3.4Q10 8 4.3 17.3" stroke="#c8c6c4" stroke-width="2.6" fill="none" stroke-linecap="round"/></svg><svg class="r" style="left:288px;top:199px;" width="22" height="22" viewBox="0 0 22 22"><path d="M4 10.6L9.6 17L19.4 4" stroke="#c8c6c4" stroke-width="2.6" fill="none"/></svg><div class="t" style="left:333.5px;top:199.39px;font-size:19.5px;line-height:19.5px;color:#797775;font-weight:400;font-style:italic;letter-spacing:0.8px;font-family:'Liberation Serif', serif;">f<span style="font-size:15.5px;letter-spacing:0">x</span></div><div class="r" style="left:369px;top:194px;width:860px;height:35px;background:#fff;border:1px solid #cfcecd;box-sizing:border-box;"></div><div class="t" style="left:381.3px;top:206.32px;font-size:13.8px;line-height:13.8px;color:#000;font-weight:400;font-style:normal;letter-spacing:0px;font-family:'Liberation Mono', monospace;">= Table.TransformColumnTypes(#"Promoted Headers",{{<span style="color:#a31515">"ORDERNUMBER"</span>, Int64.Type},</div><svg class="r" style="left:1205px;top:206px;" width="16" height="11" viewBox="0 0 16 11"><path d="M1.5 1.5L8 8.5L14.5 1.5" stroke="#605e5c" stroke-width="2.2" fill="none"/></svg><div class="r" style="left:226px;top:234px;width:1002px;height:510px;background:#f3f2f1;"></div><div class="r" style="left:226px;top:234px;width:1002px;height:27px;background:#f3f2f1;border-top:1px solid #d9d8d7;border-left:1px solid #d9d8d7;box-sizing:border-box;"></div><svg class="r" style="left:233px;top:240px;" width="26" height="16" viewBox="0 0 26 16">
<rect x="0.5" y="0.5" width="15" height="14" fill="#fff" stroke="#7a7a7a"/>
<rect x="0" y="0" width="16" height="2.5" fill="#3f76b9"/>
<path d="M0.5 6.5H15.5M0.5 10.5H15.5M5.5 2.5V14.5M10.5 2.5V14.5" stroke="#8a8a8a"/>
<path d="M17.5 11H25L21.25 14.6Z" fill="#605e5c"/>
</svg><div class="r" style="left:264px;top:235px;width:200px;height:25px;background:#117865;"></div><svg class="r" style="left:263.1px;top:236px;" width="24" height="22" viewBox="0 0 24 22">
<path d="M7.5 16.9V7.6L4.2 10.6" stroke="#ffffff" stroke-width="1.6" fill="none"/>
<text x="8.6" y="12.6" font-family="Liberation Sans" font-size="13.3" fill="#ffffff">2</text>
<text x="14.6" y="20.1" font-family="Liberation Sans" font-size="13.6" fill="#ffffff">3</text>
</svg><div class="t" style="left:294px;top:243.02px;font-size:12.5px;line-height:12.5px;color:#ffffff;font-weight:700;font-style:normal;letter-spacing:0px;font-family:'Liberation Sans', sans-serif;">ORDERNUMBER</div><div class="r" style="left:441px;top:238px;width:20px;height:20px;background:#fff;border:1px solid #c8c6c4;box-sizing:border-box;"></div><svg class="r" style="left:446px;top:246px;" width="10" height="5" viewBox="0 0 10 5"><path d="M0 0H10L5 5Z" fill="#605e5c"/></svg><div class="r" style="left:464px;top:234px;width:1px;height:27px;background:#d9d8d7;"></div><svg class="r" style="left:463.8px;top:236px;" width="24" height="22" viewBox="0 0 24 22">
<path d="M7.5 16.9V7.6L4.2 10.6" stroke="#605e5c" stroke-width="1.6" fill="none"/>
<text x="8.6" y="12.6" font-family="Liberation Sans" font-size="13.3" fill="#605e5c">2</text>
<text x="14.6" y="20.1" font-family="Liberation Sans" font-size="13.6" fill="#605e5c">3</text>
</svg><div class="t" style="left:495.2px;top:243.02px;font-size:12.5px;line-height:12.5px;color:#605e5c;font-weight:700;font-style:normal;letter-spacing:0px;font-family:'Liberation Sans', sans-serif;">QUANTITYORDERED</div><div class="r" style="left:642px;top:238px;width:20px;height:20px;background:#fff;border:1px solid #c8c6c4;box-sizing:border-box;"></div><svg class="r" style="left:647px;top:246px;" width="10" height="5" viewBox="0 0 10 5"><path d="M0 0H10L5 5Z" fill="#605e5c"/></svg><div class="r" style="left:665px;top:234px;width:1px;height:27px;background:#d9d8d7;"></div><div class="t" style="left:667.3px;top:241.40px;font-size:15px;line-height:15px;color:#605e5c;font-weight:400;font-style:normal;letter-spacing:-0.9px;font-family:'Liberation Sans', sans-serif;">1.2</div><div class="t" style="left:696.2px;top:243.02px;font-size:12.5px;line-height:12.5px;color:#605e5c;font-weight:700;font-style:normal;letter-spacing:-0.5px;font-family:'Liberation Sans', sans-serif;">PRICEEACH</div><div class="r" style="left:843px;top:238px;width:20px;height:20px;background:#fff;border:1px solid #c8c6c4;box-sizing:border-box;"></div><svg class="r" style="left:848px;top:246px;" width="10" height="5" viewBox="0 0 10 5"><path d="M0 0H10L5 5Z" fill="#605e5c"/></svg><div class="r" style="left:866px;top:234px;width:1px;height:27px;background:#d9d8d7;"></div><svg class="r" style="left:865.8px;top:236px;" width="24" height="22" viewBox="0 0 24 22">
<path d="M7.5 16.9V7.6L4.2 10.6" stroke="#605e5c" stroke-width="1.6" fill="none"/>
<text x="8.6" y="12.6" font-family="Liberation Sans" font-size="13.3" fill="#605e5c">2</text>
<text x="14.6" y="20.1" font-family="Liberation Sans" font-size="13.6" fill="#605e5c">3</text>
</svg><div class="t" style="left:897.2px;top:243.02px;font-size:12.5px;line-height:12.5px;color:#605e5c;font-weight:700;font-style:normal;letter-spacing:0px;font-family:'Liberation Sans', sans-serif;">ORDERLINENUMBER</div><div class="r" style="left:1044px;top:238px;width:20px;height:20px;background:#fff;border:1px solid #c8c6c4;box-sizing:border-box;"></div><svg class="r" style="left:1049px;top:246px;" width="10" height="5" viewBox="0 0 10 5"><path d="M0 0H10L5 5Z" fill="#605e5c"/></svg><div class="r" style="left:1067px;top:234px;width:1px;height:27px;background:#d9d8d7;"></div><div class="t" style="left:1069.3px;top:241.40px;font-size:15px;line-height:15px;color:#605e5c;font-weight:400;font-style:normal;letter-spacing:-0.9px;font-family:'Liberation Sans', sans-serif;">1.2</div><div class="t" style="left:1098.2px;top:243.02px;font-size:12.5px;line-height:12.5px;color:#605e5c;font-weight:700;font-style:normal;letter-spacing:-0.7px;font-family:'Liberation Sans', sans-serif;">SALES</div><div class="r" style="left:227px;top:260px;width:1001px;height:1px;background:#e4e2e1;"></div><div class="r" style="left:264px;top:261px;width:964px;height:5px;background:#01b8aa;"></div><div class="r" style="left:463px;top:261px;width:1px;height:5px;background:#f4fbfa;"></div><div class="r" style="left:464px;top:261px;width:1px;height:5px;background:#e2dede;"></div><div class="r" style="left:664px;top:261px;width:1px;height:5px;background:#f4fbfa;"></div><div class="r" style="left:665px;top:261px;width:1px;height:5px;background:#e2dede;"></div><div class="r" style="left:865px;top:261px;width:1px;height:5px;background:#f4fbfa;"></div><div class="r" style="left:866px;top:261px;width:1px;height:5px;background:#e2dede;"></div><div class="r" style="left:1066px;top:261px;width:1px;height:5px;background:#f4fbfa;"></div><div class="r" style="left:1067px;top:261px;width:1px;height:5px;background:#e2dede;"></div><div class="r" style="left:227px;top:261px;width:36px;height:5px;background:#f3f2f1;"></div><div class="r" style="left:227px;top:265px;width:36px;height:1px;background:#d9d8d7;"></div><div class="r" style="left:227px;top:266px;width:36px;height:478px;background:#f3f2f1;"></div><div class="r" style="left:264px;top:266px;width:200px;height:456px;background:#e6e6e6;"></div><div class="r" style="left:465px;top:266px;width:742px;height:456px;background:#ffffff;"></div><div class="r" style="left:227px;top:292px;width:36px;height:1px;background:#d9d8d7;"></div><div class="r" style="left:264px;top:292px;width:943px;height:1px;background:#d9d8d7;"></div><div class="r" style="left:227px;top:318px;width:36px;height:1px;background:#d9d8d7;"></div><div class="r" style="left:264px;top:318px;width:943px;height:1px;background:#d9d8d7;"></div><div class="r" style="left:227px;top:345px;width:36px;height:1px;background:#d9d8d7;"></div><div class="r" style="left:264px;top:345px;width:943px;height:1px;background:#d9d8d7;"></div><div class="r" style="left:227px;top:371px;width:36px;height:1px;background:#d9d8d7;"></div><div class="r" style="left:264px;top:371px;width:943px;height:1px;background:#d9d8d7;"></div><div class="r" style="left:227px;top:397px;width:36px;height:1px;background:#d9d8d7;"></div><div class="r" style="left:264px;top:397px;width:943px;height:1px;background:#d9d8d7;"></div><div class="r" style="left:227px;top:424px;width:36px;height:1px;background:#d9d8d7;"></div><div class="r" style="left:264px;top:424px;width:943px;height:1px;background:#d9d8d7;"></div><div class="r" style="left:227px;top:450px;width:36px;height:1px;background:#d9d8d7;"></div><div class="r" style="left:264px;top:450px;width:943px;height:1px;background:#d9d8d7;"></div><div class="r" style="left:227px;top:476px;width:36px;height:1px;background:#d9d8d7;"></div><div class="r" style="left:264px;top:476px;width:943px;height:1px;background:#d9d8d7;"></div><div class="r" style="left:227px;top:503px;width:36px;height:1px;background:#d9d8d7;"></div><div class="r" style="left:264px;top:503px;width:943px;height:1px;background:#d9d8d7;"></div><div class="r" style="left:227px;top:529px;width:36px;height:1px;background:#d9d8d7;"></div><div class="r" style="left:264px;top:529px;width:943px;height:1px;background:#d9d8d7;"></div><div class="r" style="left:227px;top:556px;width:36px;height:1px;background:#d9d8d7;"></div><div class="r" style="left:264px;top:556px;width:943px;height:1px;background:#d9d8d7;"></div><div class="r" style="left:227px;top:582px;width:36px;height:1px;background:#d9d8d7;"></div><div class="r" style="left:264px;top:582px;width:943px;height:1px;background:#d9d8d7;"></div><div class="r" style="left:227px;top:608px;width:36px;height:1px;background:#d9d8d7;"></div><div class="r" style="left:264px;top:608px;width:943px;height:1px;background:#d9d8d7;"></div><div class="r" style="left:227px;top:635px;width:36px;height:1px;background:#d9d8d7;"></div><div class="r" style="left:264px;top:635px;width:943px;height:1px;background:#d9d8d7;"></div><div class="r" style="left:227px;top:661px;width:36px;height:1px;background:#d9d8d7;"></div><div class="r" style="left:264px;top:661px;width:943px;height:1px;background:#d9d8d7;"></div><div class="r" style="left:227px;top:687px;width:36px;height:1px;background:#d9d8d7;"></div><div class="r" style="left:264px;top:687px;width:943px;height:1px;background:#d9d8d7;"></div><div class="r" style="left:227px;top:714px;width:36px;height:1px;background:#d9d8d7;"></div><div class="r" style="left:264px;top:714px;width:943px;height:1px;background:#d9d8d7;"></div><div class="r" style="left:227px;top:740px;width:36px;height:1px;background:#d9d8d7;"></div><div class="r" style="left:464px;top:266px;width:1px;height:456px;background:#d9d8d7;"></div><div class="r" style="left:665px;top:266px;width:1px;height:456px;background:#d9d8d7;"></div><div class="r" style="left:866px;top:266px;width:1px;height:456px;background:#d9d8d7;"></div><div class="r" style="left:1067px;top:266px;width:1px;height:456px;background:#d9d8d7;"></div><div class="r" style="left:263px;top:234px;width:1px;height:510px;background:#d9d8d7;"></div><div class="t" style="left:245.2px;transform:translateX(-50%);top:272.54px;font-size:14.6px;line-height:14.6px;color:#6f6d6b;font-weight:400;font-style:normal;letter-spacing:0px;font-family:'Liberation Sans', sans-serif;">1</div><div class="t" style="right:1106.6px;top:272.80px;font-size:13px;line-height:13px;color:#252423;font-weight:400;font-style:italic;letter-spacing:0.3px;font-family:'Liberation Sans', sans-serif;">10107</div><div class="t" style="right:905.6px;top:272.80px;font-size:13px;line-height:13px;color:#252423;font-weight:400;font-style:italic;letter-spacing:0.3px;font-family:'Liberation Sans', sans-serif;">30</div><div class="t" style="right:704.4px;top:272.80px;font-size:13px;line-height:13px;color:#252423;font-weight:400;font-style:italic;letter-spacing:0.3px;font-family:'Liberation Sans', sans-serif;">95.7</div><div class="t" style="right:504px;top:272.80px;font-size:13px;line-height:13px;color:#252423;font-weight:400;font-style:italic;letter-spacing:0.3px;font-family:'Liberation Sans', sans-serif;">2</div><div class="t" style="left:245.2px;transform:translateX(-50%);top:298.91px;font-size:14.6px;line-height:14.6px;color:#6f6d6b;font-weight:400;font-style:normal;letter-spacing:0px;font-family:'Liberation Sans', sans-serif;">2</div><div class="t" style="right:1106.6px;top:299.17px;font-size:13px;line-height:13px;color:#252423;font-weight:400;font-style:italic;letter-spacing:0.3px;font-family:'Liberation Sans', sans-serif;">10121</div><div class="t" style="right:905.6px;top:299.17px;font-size:13px;line-height:13px;color:#252423;font-weight:400;font-style:italic;letter-spacing:0.3px;font-family:'Liberation Sans', sans-serif;">34</div><div class="t" style="right:704.4px;top:299.17px;font-size:13px;line-height:13px;color:#252423;font-weight:400;font-style:italic;letter-spacing:0.3px;font-family:'Liberation Sans', sans-serif;">81.35</div><div class="t" style="right:504px;top:299.17px;font-size:13px;line-height:13px;color:#252423;font-weight:400;font-style:italic;letter-spacing:0.3px;font-family:'Liberation Sans', sans-serif;">5</div><div class="t" style="left:245.2px;transform:translateX(-50%);top:325.28px;font-size:14.6px;line-height:14.6px;color:#6f6d6b;font-weight:400;font-style:normal;letter-spacing:0px;font-family:'Liberation Sans', sans-serif;">3</div><div class="t" style="right:1106.6px;top:325.54px;font-size:13px;line-height:13px;color:#252423;font-weight:400;font-style:italic;letter-spacing:0.3px;font-family:'Liberation Sans', sans-serif;">10134</div><div class="t" style="right:905.6px;top:325.54px;font-size:13px;line-height:13px;color:#252423;font-weight:400;font-style:italic;letter-spacing:0.3px;font-family:'Liberation Sans', sans-serif;">41</div><div class="t" style="right:704.4px;top:325.54px;font-size:13px;line-height:13px;color:#252423;font-weight:400;font-style:italic;letter-spacing:0.3px;font-family:'Liberation Sans', sans-serif;">94.74</div><div class="t" style="right:504px;top:325.54px;font-size:13px;line-height:13px;color:#252423;font-weight:400;font-style:italic;letter-spacing:0.3px;font-family:'Liberation Sans', sans-serif;">2</div><div class="t" style="left:245.2px;transform:translateX(-50%);top:351.65px;font-size:14.6px;line-height:14.6px;color:#6f6d6b;font-weight:400;font-style:normal;letter-spacing:0px;font-family:'Liberation Sans', sans-serif;">4</div><div class="t" style="right:1106.6px;top:351.91px;font-size:13px;line-height:13px;color:#252423;font-weight:400;font-style:italic;letter-spacing:0.3px;font-family:'Liberation Sans', sans-serif;">10145</div><div class="t" style="right:905.6px;top:351.91px;font-size:13px;line-height:13px;color:#252423;font-weight:400;font-style:italic;letter-spacing:0.3px;font-family:'Liberation Sans', sans-serif;">45</div><div class="t" style="right:704.4px;top:351.91px;font-size:13px;line-height:13px;color:#252423;font-weight:400;font-style:italic;letter-spacing:0.3px;font-family:'Liberation Sans', sans-serif;">83.26</div><div class="t" style="right:504px;top:351.91px;font-size:13px;line-height:13px;color:#252423;font-weight:400;font-style:italic;letter-spacing:0.3px;font-family:'Liberation Sans', sans-serif;">6</div><div class="t" style="left:245.2px;transform:translateX(-50%);top:378.02px;font-size:14.6px;line-height:14.6px;color:#6f6d6b;font-weight:400;font-style:normal;letter-spacing:0px;font-family:'Liberation Sans', sans-serif;">5</div><div class="t" style="right:1106.6px;top:378.28px;font-size:13px;line-height:13px;color:#252423;font-weight:400;font-style:italic;letter-spacing:0.3px;font-family:'Liberation Sans', sans-serif;">10159</div><div class="t" style="right:905.6px;top:378.28px;font-size:13px;line-height:13px;color:#252423;font-weight:400;font-style:italic;letter-spacing:0.3px;font-family:'Liberation Sans', sans-serif;">49</div><div class="t" style="right:704.4px;top:378.28px;font-size:13px;line-height:13px;color:#252423;font-weight:400;font-style:italic;letter-spacing:0.3px;font-family:'Liberation Sans', sans-serif;">100</div><div class="t" style="right:504px;top:378.28px;font-size:13px;line-height:13px;color:#252423;font-weight:400;font-style:italic;letter-spacing:0.3px;font-family:'Liberation Sans', sans-serif;">14</div><div class="t" style="left:245.2px;transform:translateX(-50%);top:404.39px;font-size:14.6px;line-height:14.6px;color:#6f6d6b;font-weight:400;font-style:normal;letter-spacing:0px;font-family:'Liberation Sans', sans-serif;">6</div><div class="t" style="right:1106.6px;top:404.65px;font-size:13px;line-height:13px;color:#252423;font-weight:400;font-style:italic;letter-spacing:0.3px;font-family:'Liberation Sans', sans-serif;">10168</div><div class="t" style="right:905.6px;top:404.65px;font-size:13px;line-height:13px;color:#252423;font-weight:400;font-style:italic;letter-spacing:0.3px;font-family:'Liberation Sans', sans-serif;">36</div><div class="t" style="right:704.4px;top:404.65px;font-size:13px;line-height:13px;color:#252423;font-weight:400;font-style:italic;letter-spacing:0.3px;font-family:'Liberation Sans', sans-serif;">96.66</div><div class="t" style="right:504px;top:404.65px;font-size:13px;line-height:13px;color:#252423;font-weight:400;font-style:italic;letter-spacing:0.3px;font-family:'Liberation Sans', sans-serif;">1</div><div class="t" style="left:245.2px;transform:translateX(-50%);top:430.76px;font-size:14.6px;line-height:14.6px;color:#6f6d6b;font-weight:400;font-style:normal;letter-spacing:0px;font-family:'Liberation Sans', sans-serif;">7</div><div class="t" style="right:1106.6px;top:431.02px;font-size:13px;line-height:13px;color:#252423;font-weight:400;font-style:italic;letter-spacing:0.3px;font-family:'Liberation Sans', sans-serif;">10180</div><div class="t" style="right:905.6px;top:431.02px;font-size:13px;line-height:13px;color:#252423;font-weight:400;font-style:italic;letter-spacing:0.3px;font-family:'Liberation Sans', sans-serif;">29</div><div class="t" style="right:704.4px;top:431.02px;font-size:13px;line-height:13px;color:#252423;font-weight:400;font-style:italic;letter-spacing:0.3px;font-family:'Liberation Sans', sans-serif;">86.13</div><div class="t" style="right:504px;top:431.02px;font-size:13px;line-height:13px;color:#252423;font-weight:400;font-style:italic;letter-spacing:0.3px;font-family:'Liberation Sans', sans-serif;">9</div><div class="t" style="left:245.2px;transform:translateX(-50%);top:457.13px;font-size:14.6px;line-height:14.6px;color:#6f6d6b;font-weight:400;font-style:normal;letter-spacing:0px;font-family:'Liberation Sans', sans-serif;">8</div><div class="t" style="right:1106.6px;top:457.39px;font-size:13px;line-height:13px;color:#252423;font-weight:400;font-style:italic;letter-spacing:0.3px;font-family:'Liberation Sans', sans-serif;">10188</div><div class="t" style="right:905.6px;top:457.39px;font-size:13px;line-height:13px;color:#252423;font-weight:400;font-style:italic;letter-spacing:0.3px;font-family:'Liberation Sans', sans-serif;">48</div><div class="t" style="right:704.4px;top:457.39px;font-size:13px;line-height:13px;color:#252423;font-weight:400;font-style:italic;letter-spacing:0.3px;font-family:'Liberation Sans', sans-serif;">100</div><div class="t" style="right:504px;top:457.39px;font-size:13px;line-height:13px;color:#252423;font-weight:400;font-style:italic;letter-spacing:0.3px;font-family:'Liberation Sans', sans-serif;">1</div><div class="t" style="left:245.2px;transform:translateX(-50%);top:483.50px;font-size:14.6px;line-height:14.6px;color:#6f6d6b;font-weight:400;font-style:normal;letter-spacing:0px;font-family:'Liberation Sans', sans-serif;">9</div><div class="t" style="right:1106.6px;top:483.76px;font-size:13px;line-height:13px;color:#252423;font-weight:400;font-style:italic;letter-spacing:0.3px;font-family:'Liberation Sans', sans-serif;">10201</div><div class="t" style="right:905.6px;top:483.76px;font-size:13px;line-height:13px;color:#252423;font-weight:400;font-style:italic;letter-spacing:0.3px;font-family:'Liberation Sans', sans-serif;">22</div><div class="t" style="right:704.4px;top:483.76px;font-size:13px;line-height:13px;color:#252423;font-weight:400;font-style:italic;letter-spacing:0.3px;font-family:'Liberation Sans', sans-serif;">98.57</div><div class="t" style="right:504px;top:483.76px;font-size:13px;line-height:13px;color:#252423;font-weight:400;font-style:italic;letter-spacing:0.3px;font-family:'Liberation Sans', sans-serif;">2</div><div class="t" style="left:245.2px;transform:translateX(-50%);top:509.87px;font-size:14.6px;line-height:14.6px;color:#6f6d6b;font-weight:400;font-style:normal;letter-spacing:0px;font-family:'Liberation Sans', sans-serif;">10</div><div class="t" style="right:1106.6px;top:510.13px;font-size:13px;line-height:13px;color:#252423;font-weight:400;font-style:italic;letter-spacing:0.3px;font-family:'Liberation Sans', sans-serif;">10211</div><div class="t" style="right:905.6px;top:510.13px;font-size:13px;line-height:13px;color:#252423;font-weight:400;font-style:italic;letter-spacing:0.3px;font-family:'Liberation Sans', sans-serif;">41</div><div class="t" style="right:704.4px;top:510.13px;font-size:13px;line-height:13px;color:#252423;font-weight:400;font-style:italic;letter-spacing:0.3px;font-family:'Liberation Sans', sans-serif;">100</div><div class="t" style="right:504px;top:510.13px;font-size:13px;line-height:13px;color:#252423;font-weight:400;font-style:italic;letter-spacing:0.3px;font-family:'Liberation Sans', sans-serif;">14</div><div class="t" style="left:245.2px;transform:translateX(-50%);top:536.24px;font-size:14.6px;line-height:14.6px;color:#6f6d6b;font-weight:400;font-style:normal;letter-spacing:0px;font-family:'Liberation Sans', sans-serif;">11</div><div class="t" style="right:1106.6px;top:536.50px;font-size:13px;line-height:13px;color:#252423;font-weight:400;font-style:italic;letter-spacing:0.3px;font-family:'Liberation Sans', sans-serif;">10223</div><div class="t" style="right:905.6px;top:536.50px;font-size:13px;line-height:13px;color:#252423;font-weight:400;font-style:italic;letter-spacing:0.3px;font-family:'Liberation Sans', sans-serif;">37</div><div class="t" style="right:704.4px;top:536.50px;font-size:13px;line-height:13px;color:#252423;font-weight:400;font-style:italic;letter-spacing:0.3px;font-family:'Liberation Sans', sans-serif;">100</div><div class="t" style="right:504px;top:536.50px;font-size:13px;line-height:13px;color:#252423;font-weight:400;font-style:italic;letter-spacing:0.3px;font-family:'Liberation Sans', sans-serif;">1</div><div class="t" style="left:245.2px;transform:translateX(-50%);top:562.61px;font-size:14.6px;line-height:14.6px;color:#6f6d6b;font-weight:400;font-style:normal;letter-spacing:0px;font-family:'Liberation Sans', sans-serif;">12</div><div class="t" style="right:1106.6px;top:562.87px;font-size:13px;line-height:13px;color:#252423;font-weight:400;font-style:italic;letter-spacing:0.3px;font-family:'Liberation Sans', sans-serif;">10237</div><div class="t" style="right:905.6px;top:562.87px;font-size:13px;line-height:13px;color:#252423;font-weight:400;font-style:italic;letter-spacing:0.3px;font-family:'Liberation Sans', sans-serif;">23</div><div class="t" style="right:704.4px;top:562.87px;font-size:13px;line-height:13px;color:#252423;font-weight:400;font-style:italic;letter-spacing:0.3px;font-family:'Liberation Sans', sans-serif;">100</div><div class="t" style="right:504px;top:562.87px;font-size:13px;line-height:13px;color:#252423;font-weight:400;font-style:italic;letter-spacing:0.3px;font-family:'Liberation Sans', sans-serif;">7</div><div class="t" style="left:245.2px;transform:translateX(-50%);top:588.98px;font-size:14.6px;line-height:14.6px;color:#6f6d6b;font-weight:400;font-style:normal;letter-spacing:0px;font-family:'Liberation Sans', sans-serif;">13</div><div class="t" style="right:1106.6px;top:589.24px;font-size:13px;line-height:13px;color:#252423;font-weight:400;font-style:italic;letter-spacing:0.3px;font-family:'Liberation Sans', sans-serif;">10251</div><div class="t" style="right:905.6px;top:589.24px;font-size:13px;line-height:13px;color:#252423;font-weight:400;font-style:italic;letter-spacing:0.3px;font-family:'Liberation Sans', sans-serif;">28</div><div class="t" style="right:704.4px;top:589.24px;font-size:13px;line-height:13px;color:#252423;font-weight:400;font-style:italic;letter-spacing:0.3px;font-family:'Liberation Sans', sans-serif;">100</div><div class="t" style="right:504px;top:589.24px;font-size:13px;line-height:13px;color:#252423;font-weight:400;font-style:italic;letter-spacing:0.3px;font-family:'Liberation Sans', sans-serif;">2</div><div class="t" style="left:245.2px;transform:translateX(-50%);top:615.35px;font-size:14.6px;line-height:14.6px;color:#6f6d6b;font-weight:400;font-style:normal;letter-spacing:0px;font-family:'Liberation Sans', sans-serif;">14</div><div class="t" style="right:1106.6px;top:615.61px;font-size:13px;line-height:13px;color:#252423;font-weight:400;font-style:italic;letter-spacing:0.3px;font-family:'Liberation Sans', sans-serif;">10263</div><div class="t" style="right:905.6px;top:615.61px;font-size:13px;line-height:13px;color:#252423;font-weight:400;font-style:italic;letter-spacing:0.3px;font-family:'Liberation Sans', sans-serif;">34</div><div class="t" style="right:704.4px;top:615.61px;font-size:13px;line-height:13px;color:#252423;font-weight:400;font-style:italic;letter-spacing:0.3px;font-family:'Liberation Sans', sans-serif;">100</div><div class="t" style="right:504px;top:615.61px;font-size:13px;line-height:13px;color:#252423;font-weight:400;font-style:italic;letter-spacing:0.3px;font-family:'Liberation Sans', sans-serif;">2</div><div class="t" style="left:245.2px;transform:translateX(-50%);top:641.72px;font-size:14.6px;line-height:14.6px;color:#6f6d6b;font-weight:400;font-style:normal;letter-spacing:0px;font-family:'Liberation Sans', sans-serif;">15</div><div class="t" style="right:1106.6px;top:641.98px;font-size:13px;line-height:13px;color:#252423;font-weight:400;font-style:italic;letter-spacing:0.3px;font-family:'Liberation Sans', sans-serif;">10275</div><div class="t" style="right:905.6px;top:641.98px;font-size:13px;line-height:13px;color:#252423;font-weight:400;font-style:italic;letter-spacing:0.3px;font-family:'Liberation Sans', sans-serif;">45</div><div class="t" style="right:704.4px;top:641.98px;font-size:13px;line-height:13px;color:#252423;font-weight:400;font-style:italic;letter-spacing:0.3px;font-family:'Liberation Sans', sans-serif;">92.83</div><div class="t" style="right:504px;top:641.98px;font-size:13px;line-height:13px;color:#252423;font-weight:400;font-style:italic;letter-spacing:0.3px;font-family:'Liberation Sans', sans-serif;">1</div><div class="t" style="left:245.2px;transform:translateX(-50%);top:668.09px;font-size:14.6px;line-height:14.6px;color:#6f6d6b;font-weight:400;font-style:normal;letter-spacing:0px;font-family:'Liberation Sans', sans-serif;">16</div><div class="t" style="right:1106.6px;top:668.35px;font-size:13px;line-height:13px;color:#252423;font-weight:400;font-style:italic;letter-spacing:0.3px;font-family:'Liberation Sans', sans-serif;">10285</div><div class="t" style="right:905.6px;top:668.35px;font-size:13px;line-height:13px;color:#252423;font-weight:400;font-style:italic;letter-spacing:0.3px;font-family:'Liberation Sans', sans-serif;">36</div><div class="t" style="right:704.4px;top:668.35px;font-size:13px;line-height:13px;color:#252423;font-weight:400;font-style:italic;letter-spacing:0.3px;font-family:'Liberation Sans', sans-serif;">100</div><div class="t" style="right:504px;top:668.35px;font-size:13px;line-height:13px;color:#252423;font-weight:400;font-style:italic;letter-spacing:0.3px;font-family:'Liberation Sans', sans-serif;">6</div><div class="t" style="left:245.2px;transform:translateX(-50%);top:694.46px;font-size:14.6px;line-height:14.6px;color:#6f6d6b;font-weight:400;font-style:normal;letter-spacing:0px;font-family:'Liberation Sans', sans-serif;">17</div><div class="t" style="right:1106.6px;top:694.72px;font-size:13px;line-height:13px;color:#252423;font-weight:400;font-style:italic;letter-spacing:0.3px;font-family:'Liberation Sans', sans-serif;">10299</div><div class="t" style="right:905.6px;top:694.72px;font-size:13px;line-height:13px;color:#252423;font-weight:400;font-style:italic;letter-spacing:0.3px;font-family:'Liberation Sans', sans-serif;">23</div><div class="t" style="right:704.4px;top:694.72px;font-size:13px;line-height:13px;color:#252423;font-weight:400;font-style:italic;letter-spacing:0.3px;font-family:'Liberation Sans', sans-serif;">100</div><div class="t" style="right:504px;top:694.72px;font-size:13px;line-height:13px;color:#252423;font-weight:400;font-style:italic;letter-spacing:0.3px;font-family:'Liberation Sans', sans-serif;">9</div><div class="t" style="left:245.2px;transform:translateX(-50%);top:720.83px;font-size:14.6px;line-height:14.6px;color:#6f6d6b;font-weight:400;font-style:normal;letter-spacing:0px;font-family:'Liberation Sans', sans-serif;">18</div><div class="r" style="left:1207px;top:266px;width:21px;height:456px;background:#efefef;"></div><div class="r" style="left:1208px;top:309px;width:19px;height:127px;background:#c8c8c8;"></div><svg class="r" style="left:1211px;top:287.3px;" width="14" height="12" viewBox="0 0 14 12"><path d="M0 11.3V6.6L6.9 0L13.7 6.6V11.3L6.9 5.1Z" fill="#5a5a5a"/></svg><svg class="r" style="left:1211px;top:689.2px;" width="14" height="12" viewBox="0 0 14 12"><path d="M0 0V4.7L6.9 11.4L13.7 4.7V0L6.9 6.2Z" fill="#5a5a5a"/></svg><div class="r" style="left:264px;top:722px;width:964px;height:20px;background:#efefef;"></div><div class="r" style="left:306px;top:724px;width:156px;height:18px;background:#c8c8c8;"></div><svg class="r" style="left:285.2px;top:726px;" width="12" height="14" viewBox="0 0 12 14"><path d="M11.8 0H7.1L0 7L7.1 14H11.8L5.5 7Z" fill="#5a5a5a"/></svg><svg class="r" style="left:1174.6px;top:726px;" width="12" height="14" viewBox="0 0 12 14"><path d="M0 0H4.7L11.4 7L4.7 14H0L6.2 7Z" fill="#5a5a5a"/></svg><div class="r" style="left:226px;top:234px;width:1px;height:510px;background:#d9d8d7;"></div><div class="r" style="left:1233px;top:181px;width:1px;height:561px;background:#d6d5d4;"></div><div class="t" style="left:1248.6px;top:195.98px;font-size:16.8px;line-height:16.8px;color:#767472;font-weight:400;font-style:normal;letter-spacing:-0.2px;font-family:'Liberation Sans', sans-serif;">Query Settings</div><svg class="r" style="left:1520px;top:197px;" width="15" height="14" viewBox="0 0 15 14"><path d="M0.8 0.8L14.2 13.2M14.2 0.8L0.8 13.2" stroke="#605e5c" stroke-width="1.3"/></svg><svg class="r" style="left:1247px;top:240px;" width="7" height="7" viewBox="0 0 7 7"><path d="M7 0V7H0Z" fill="#605e5c"/></svg><div class="t" style="left:1264.4px;top:237.96px;font-size:13.4px;line-height:13.4px;color:#252423;font-weight:700;font-style:normal;letter-spacing:0px;font-family:'Liberation Sans', sans-serif;">PROPERTIES</div><div class="t" style="left:1264.4px;top:262.68px;font-size:14.2px;line-height:14.2px;color:#252423;font-weight:400;font-style:normal;letter-spacing:0px;font-family:'Liberation Sans', sans-serif;">Name</div><div class="r" style="left:1264px;top:281px;width:273px;height:28px;background:#fff;border:1px solid #c8c6c4;box-sizing:border-box;"></div><div class="t" style="left:1271.3px;top:289.25px;font-size:14px;line-height:14px;color:#252423;font-weight:400;font-style:normal;letter-spacing:-0.3px;font-family:'Liberation Sans', sans-serif;">Sales Data</div><div class="t" style="left:1264.3px;top:321.84px;font-size:14.6px;line-height:14.6px;color:#117865;font-weight:400;font-style:normal;letter-spacing:0px;font-family:'Liberation Sans', sans-serif;">All Properties</div><svg class="r" style="left:1247px;top:367.5px;" width="7" height="7" viewBox="0 0 7 7"><path d="M7 0V7H0Z" fill="#605e5c"/></svg><div class="t" style="left:1264.3px;top:365.29px;font-size:13.6px;line-height:13.6px;color:#252423;font-weight:700;font-style:normal;letter-spacing:0px;font-family:'Liberation Sans', sans-serif;">APPLIED STEPS</div><div class="r" style="left:1264px;top:388px;width:273px;height:324px;background:none;border:1px solid #c8c6c4;box-sizing:border-box;"></div><div class="t" style="left:1293px;top:395.51px;font-size:14.4px;line-height:14.4px;color:#252423;font-weight:400;font-style:normal;letter-spacing:0px;font-family:'Liberation Sans', sans-serif;">Source</div><div class="t" style="left:1293px;top:420.31px;font-size:14.4px;line-height:14.4px;color:#252423;font-weight:400;font-style:normal;letter-spacing:0.2px;font-family:'Liberation Sans', sans-serif;">Promoted Headers</div><div class="r" style="left:1265px;top:440px;width:271px;height:25px;background:#d2d0ce;"></div><div class="r" style="left:1265px;top:440px;width:3px;height:25px;background:#117865;"></div><svg class="r" style="left:1274px;top:447px;" width="12" height="11" viewBox="0 0 12 11"><path d="M1 1L11 10M11 1L1 10" stroke="#797775" stroke-width="1.9"/></svg><div class="t" style="left:1293px;top:446.31px;font-size:14.4px;line-height:14.4px;color:#252423;font-weight:400;font-style:normal;letter-spacing:0.2px;font-family:'Liberation Sans', sans-serif;">Changed Type</div><svg class="r" style="left:1513px;top:395.5px;" width="14" height="14" viewBox="0 0 14 14"><g fill="#a19f9d"><circle cx="7" cy="7" r="4.6"/><rect x="5.6" y="0" width="2.8" height="14" transform="rotate(0 7 7)"/><rect x="5.6" y="0" width="2.8" height="14" transform="rotate(60 7 7)"/><rect x="5.6" y="0" width="2.8" height="14" transform="rotate(120 7 7)"/></g><circle cx="7" cy="7" r="2.1" fill="#f3f2f1"/></svg><svg class="r" style="left:1513px;top:420.5px;" width="14" height="14" viewBox="0 0 14 14"><g fill="#a19f9d"><circle cx="7" cy="7" r="4.6"/><rect x="5.6" y="0" width="2.8" height="14" transform="rotate(0 7 7)"/><rect x="5.6" y="0" width="2.8" height="14" transform="rotate(60 7 7)"/><rect x="5.6" y="0" width="2.8" height="14" transform="rotate(120 7 7)"/></g><circle cx="7" cy="7" r="2.1" fill="#f3f2f1"/></svg><div class="r" style="left:0px;top:744px;width:1566px;height:1px;background:#d6d6d6;"></div><div class="r" style="left:0px;top:745px;width:1566px;height:25px;background:#f3f2f1;"></div><div class="t" style="left:2px;top:751.15px;font-size:14px;line-height:14px;color:#3b3a39;font-weight:400;font-style:normal;letter-spacing:-0.55px;font-family:'Liberation Sans', sans-serif;">25 COLUMNS, 999+ ROWS</div><div class="t" style="left:185px;top:751.15px;font-size:14px;line-height:14px;color:#3b3a39;font-weight:400;font-style:normal;letter-spacing:0px;font-family:'Liberation Sans', sans-serif;">Column profiling based on top 1000 rows</div><div class="t" style="left:1350.5px;top:751.15px;font-size:14px;line-height:14px;color:#3b3a39;font-weight:400;font-style:normal;letter-spacing:-0.7px;font-family:'Liberation Sans', sans-serif;">PREVIEW DOWNLOADED AT 19:37</div>
</body></html>
